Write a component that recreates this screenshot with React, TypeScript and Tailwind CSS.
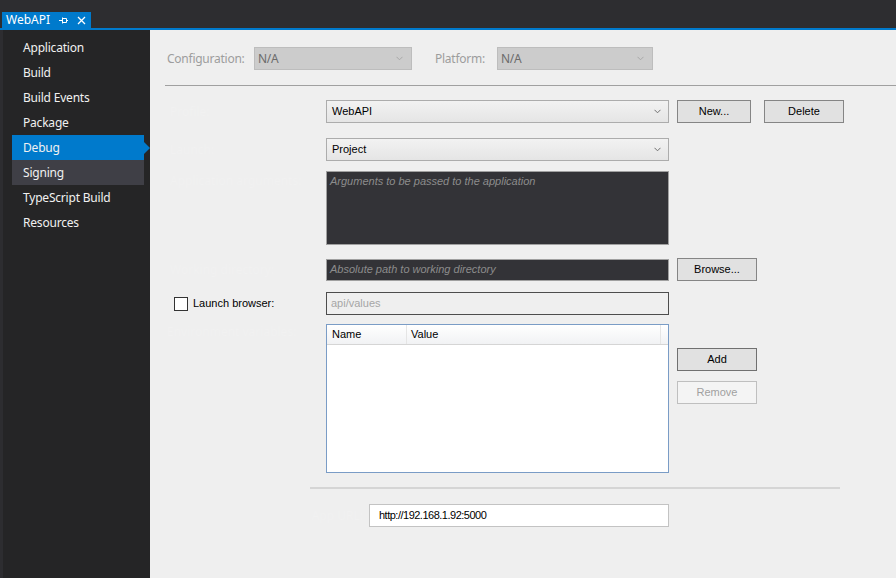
import React from 'react'

const navItems = ["Application", "Build", "Build Events", "Package", "Debug", "Signing", "TypeScript Build", "Resources"]

const ui = { fontFamily: '"Noto Sans", "Open Sans", sans-serif' }
const win = { fontFamily: '"Liberation Sans", Arial, sans-serif' }

function Chevron({ className }: { className?: string }) {
  return (
    <svg width="7" height="5" viewBox="0 0 7 5" className={className}>
      <path d="M0.5 0.8 L3.5 3.8 L6.5 0.8" fill="none" stroke="currentColor" strokeWidth="1" />
    </svg>
  )
}

function WinSelect({ value }: { value: string }) {
  return (
    <div className="h-[23px] w-[343px] flex items-center justify-between border border-[#acacac] bg-gradient-to-b from-[#f2f2f2] to-[#e5e5e5] pl-[5px] pr-[7px] text-[11px] text-black" style={win}>
      <span>{value}</span>
      <Chevron className="text-[#6f6f6f]" />
    </div>
  )
}

function WinButton({ label, w, disabled, strong }: { label: string, w: string, disabled?: boolean, strong?: boolean }) {
  return (
    <div
      className={
        "h-[23px] flex items-center justify-center border text-[11px] " + w + " " +
        (disabled
          ? "bg-[#f4f4f4] border-[#bfbfbf] text-[#a0a0a0]"
          : strong
            ? "bg-[#e1e1e1] border-[#707070] text-black"
            : "bg-[#e1e1e1] border-[#858585] text-black")
      }
      style={win}
    >
      {label}
    </div>
  )
}

// labels that are drawn almost the same colour as the panel
function Hidden({ children }: { children: React.ReactNode }) {
  return <span className="text-[12px] leading-none whitespace-nowrap text-[#f1f1f1]" style={ui}>{children}</span>
}

export default function App() {
  return (
    <div className="w-[896px] h-[578px] flex flex-col bg-[#2d2d30] overflow-hidden">
      <div className="h-[28px] flex items-end pl-[2px]">
        <div className="h-[16px] w-[89px] bg-[#007acc] flex items-center pl-[4px] text-white text-[12px] leading-none" style={ui}>
          <span>WebAPI</span>
          <svg width="9" height="9" viewBox="0 0 9 9" className="ml-[9px]">
            <path d="M0 4.5 H3 M3.5 1.5 V7.5 M3.5 2.5 H7.5 V6.5 H3.5 M7.5 4.5 H9" fill="none" stroke="white" strokeWidth="1" />
          </svg>
          <svg width="9" height="9" viewBox="0 0 9 9" className="ml-[9px]">
            <path d="M1 1 L8 8 M8 1 L1 8" fill="none" stroke="white" strokeWidth="1.3" />
          </svg>
        </div>
      </div>
      <div className="h-[2px] bg-[#007acc]" />

      <div className="flex-1 flex">
        <div className="w-[150px] bg-[#252526] pt-[5px] border-l-[3px] border-[#2d2d30]">
          {navItems.map((item) => (
            <div
              key={item}
              className={
                "relative ml-[9px] w-[132px] h-[25px] flex items-center pl-[11px] text-[12px] tracking-[-0.2px] text-[#f1f1f1] " +
                (item === "Debug" ? "bg-[#007acc]" : item === "Signing" ? "bg-[#3f3f46]" : "")
              }
              style={ui}
            >
              {item}
              {item === "Debug" && (
                <div className="absolute right-[-6px] top-[7px] w-0 h-0 border-y-[6px] border-y-transparent border-l-[6px] border-l-[#007acc]" />
              )}
            </div>
          ))}
        </div>

        <div className="flex-1 bg-[#efefef] pt-[17px] text-[12px] leading-none">
          <div className="flex items-center h-[23px] pl-[17px] text-[12px] tracking-[-0.25px] text-[#9d9d9d]" style={ui}>
            <span className="w-[87px]">Configuration:</span>
            <div className="w-[158px] h-[23px] flex items-center justify-between bg-[#cccccc] border border-[#bdbdbd] pl-[3px] pr-[8px] text-[#6b6b6b]">
              <span>N/A</span>
              <Chevron className="text-[#a8a8a8]" />
            </div>
            <span className="ml-[23px] w-[62px]">Platform:</span>
            <div className="w-[156px] h-[23px] flex items-center justify-between bg-[#cccccc] border border-[#bdbdbd] pl-[3px] pr-[8px] text-[#6b6b6b]">
              <span>N/A</span>
              <Chevron className="text-[#a8a8a8]" />
            </div>
          </div>

          <div className="ml-[15px] mt-[15px] h-[1px] bg-[#a0a0a0]" />

          <div className="pl-[20px] mt-[14px] flex flex-col">
            <div className="flex items-center">
              <div className="w-[156px]"><Hidden>Profile:</Hidden></div>
              <WinSelect value="WebAPI" />
              <div className="ml-[8px] flex gap-[13px]">
                <WinButton label="New..." w="w-[74px]" />
                <WinButton label="Delete" w="w-[80px]" />
              </div>
            </div>

            <div className="flex items-center mt-[15px]">
              <div className="w-[156px]"><Hidden>Launch:</Hidden></div>
              <WinSelect value="Project" />
            </div>

            <div className="flex items-start mt-[10px]">
              <div className="w-[156px] pt-[4px]"><Hidden>Application arguments:</Hidden></div>
              <div className="w-[343px] h-[74px] bg-[#333337] border border-[#a0a0a0] px-[3px] pt-[3px] text-[11px] leading-[13px] italic text-[#8c8c8c]" style={win}>
                Arguments to be passed to the application
              </div>
            </div>

            <div className="flex items-center mt-[13px]">
              <div className="w-[156px]"><Hidden>Working directory:</Hidden></div>
              <div className="w-[343px] h-[22px] flex items-center bg-[#333337] border border-[#a0a0a0] px-[3px] text-[11px] italic text-[#8c8c8c]" style={win}>
                Absolute path to working directory
              </div>
              <div className="ml-[8px]">
                <WinButton label="Browse..." w="w-[80px]" />
              </div>
            </div>

            <div className="flex items-center mt-[11px]">
              <div className="w-[156px] flex items-center pl-[4px]">
                <div className="w-[14px] h-[14px] bg-white border border-[#333333]" />
                <span className="ml-[5px] text-[11px] text-black" style={win}>Launch browser:</span>
              </div>
              <div className="w-[343px] h-[23px] flex items-center bg-[#efefef] border border-[#4d4d4d] px-[4px] text-[11px] text-[#a6a6a6]" style={win}>
                api/values
              </div>
            </div>

            <div className="flex items-start mt-[9px]">
              <div className="w-[156px] -ml-[3px] pt-[2px]"><Hidden>Environment variables:</Hidden></div>
              <div className="w-[343px] h-[149px] bg-white border border-[#7a9cc6] text-[11px] text-black ml-[3px]" style={win}>
                <div className="h-[20px] flex bg-gradient-to-b from-white to-[#f1f2f4] border-b border-[#d5d5d5]">
                  <div className="w-[80px] flex items-center pl-[5px] border-r border-[#e5e5e5]">Name</div>
                  <div className="flex-1 flex items-center pl-[4px] border-r border-[#e5e5e5]">Value</div>
                  <div className="w-[7px]" />
                </div>
              </div>
              <div className="ml-[8px] mt-[24px] flex flex-col gap-[10px]">
                <WinButton label="Add" w="w-[80px]" strong />
                <WinButton label="Remove" w="w-[80px]" disabled />
              </div>
            </div>
          </div>

          <div className="ml-[160px] w-[530px] mt-[14px] h-[2px] bg-[#d5d5d5]" />

          <div className="flex items-center mt-[15px] pl-[170px]">
            <div className="w-[49px] flex justify-end pr-[6px]"><Hidden>App URL:</Hidden></div>
            <div className="w-[300px] h-[23px] flex items-center bg-white border border-[#c3c3c3] px-[9px] text-[11px] text-black tracking-[-0.5px]" style={win}>
              http://192.168.1.92:5000
            </div>
          </div>
        </div>
      </div>
    </div>
  )
}
